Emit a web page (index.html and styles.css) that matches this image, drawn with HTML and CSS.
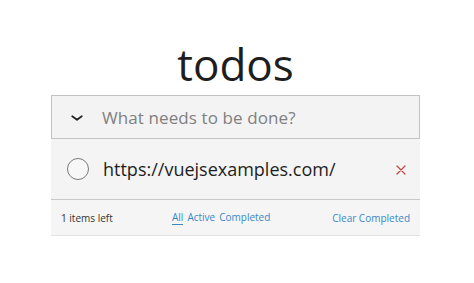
FILE: index.html
```html
<!DOCTYPE html>
<html>
<head>
<meta charset="utf-8">
<link rel="stylesheet" href="styles.css">
</head>
<body>
<section class="app">
  <h1 class="title">todos</h1>
  <div class="panel">
    <div class="new-row">
      <span class="toggle-all">
        <svg width="12" height="6" viewBox="0 0 12 6"><path d="M1.2 1.2 L6 4.8 L10.8 1.2" fill="none" stroke="#222" stroke-width="1.7" stroke-linecap="round" stroke-linejoin="round"/></svg>
      </span>
      <span class="placeholder">What needs to be done?</span>
    </div>
    <div class="item">
      <span class="check"></span>
      <span class="label">https://vuejsexamples.com/</span>
      <span class="destroy">
        <svg width="10" height="10" viewBox="0 0 10 10"><path d="M1 1 L9 9 M9 1 L1 9" fill="none" stroke="#c44a4a" stroke-width="1.3" stroke-linecap="round"/></svg>
      </span>
    </div>
    <div class="footer">
      <span class="count">1 items left</span>
      <span class="filters">
        <a class="filter selected">All</a>
        <a class="filter">Active</a>
        <a class="filter">Completed</a>
      </span>
      <a class="clear">Clear Completed</a>
    </div>
  </div>
</section>
</body>
</html>
```
FILE: styles.css
```css
html, body {
  margin: 0;
  padding: 0;
  background: #ffffff;
}
body {
  font-family: "Open Sans", "Noto Sans", sans-serif;
  color: #222;
}
.app {
  width: 369px;
  margin: 0 0 0 51px;
  padding-top: 33px;
}
.title {
  margin: 0;
  text-align: center;
  font-weight: 400;
  font-size: 44px;
  line-height: 62px;
  color: #1e1e1e;
}
.panel {
  background: #f4f4f4;
}
.new-row {
  height: 42px;
  border: 1px solid #c3c3c3;
  display: flex;
  align-items: center;
  background: #f3f3f3;
}
.toggle-all {
  width: 50px;
  display: flex;
  justify-content: center;
  padding-top: 1px;
}
.placeholder {
  font-size: 17px;
  color: #808080;
  letter-spacing: 0.1px;
}
.item {
  height: 60px;
  display: flex;
  align-items: center;
  border-bottom: 1px solid #c8c8c8;
  background: #f4f4f4;
}
.check {
  width: 20px;
  height: 20px;
  border: 1px solid #7a7a7a;
  border-radius: 50%;
  margin-left: 16px;
  margin-right: 14px;
  background: #f7f7f7;
}
.label {
  flex: 1;
  font-size: 18px;
  color: #1e1e1e;
}
.destroy {
  display: flex;
  margin-right: 14px;
  padding-top: 1px;
}
.footer {
  height: 35px;
  display: flex;
  align-items: center;
  font-size: 10px;
  border-bottom: 1px solid #e2e2e2;
  background: #f5f5f5;
  padding: 0 10px 0 10px;
}
.count {
  width: 111px;
  color: #333;
}
.filters {
  flex: 1;
  display: flex;
  gap: 4px;
}
.filter, .clear {
  color: #3a87c8;
  text-decoration: none;
}
.filter.selected {
  border-bottom: 1px solid #3a87c8;
}
```
